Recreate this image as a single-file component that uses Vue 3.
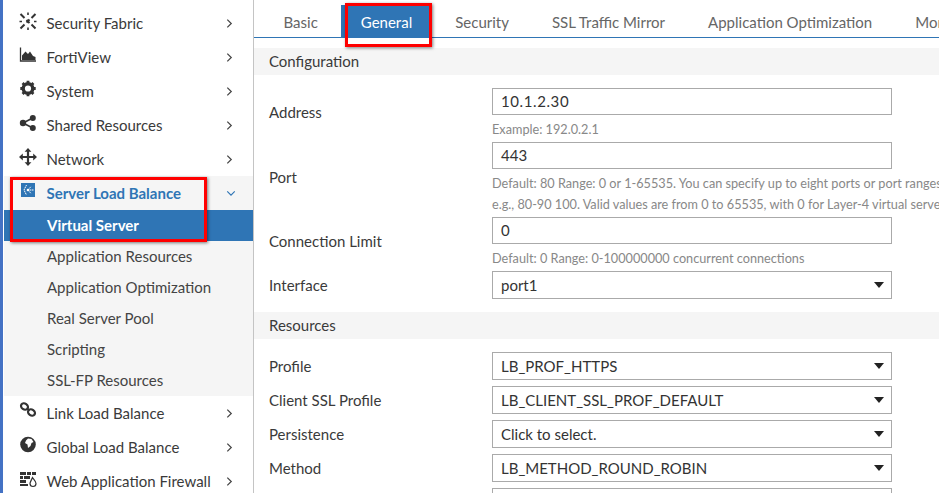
<script setup>
const topItems = [
  { name: 'Security Fabric', icon: 'fabric' },
  { name: 'FortiView', icon: 'view' },
  { name: 'System', icon: 'gear' },
  { name: 'Shared Resources', icon: 'share' },
  { name: 'Network', icon: 'move' }
]
const subItems = ['Application Resources', 'Application Optimization', 'Real Server Pool', 'Scripting', 'SSL-FP Resources']
const bottomItems = [
  { name: 'Link Load Balance', icon: 'link' },
  { name: 'Global Load Balance', icon: 'globe' },
  { name: 'Web Application Firewall', icon: 'wall' }
]
const tabs = ['Basic', 'General', 'Security', 'SSL Traffic Mirror', 'Application Optimization', 'Monitor']
const resources = [
  ['Profile', 'LB_PROF_HTTPS'],
  ['Client SSL Profile', 'LB_CLIENT_SSL_PROF_DEFAULT'],
  ['Persistence', 'Click to select.'],
  ['Method', 'LB_METHOD_ROUND_ROBIN'],
  ['', '']
]
</script>

<template>
  <div class="page">
    <aside class="sidebar">
      <div v-for="item in topItems" :key="item.name" class="nav-row">
        <svg class="nav-icon" viewBox="0 0 18 18">
          <g v-if="item.icon === 'fabric'" fill="none" stroke="#333" stroke-width="2">
            <path d="M1.500 2l4 4M12.500 12.500l4 4M16.500 2l-4 4M5.500 12.500l-4 4M7.500 8l3 3M10.500 7.500l-3 3" />
            <path d="M9 .5v2.500M.5 9.500h2.500M15 9.500h2.500M9 15.500V18" stroke-width="1.600" />
          </g>
          <g v-else-if="item.icon === 'view'">
            <path d="M1.500 1.500v13.500h15.500" fill="none" stroke="#333" stroke-width="1.300" />
            <path d="M3 14V9.500l3.500-4 2.500 2.500 2-2.500 3 4.500 2.500 1V14z" fill="#333" />
          </g>
          <g v-else-if="item.icon === 'gear'">
            <circle cx="9" cy="8.500" r="4.800" fill="none" stroke="#333" stroke-width="3.400" />
            <path d="M9 .8v3M9 13.200v3M1.300 8.500h3M13.700 8.500h3M3.600 3.100l2.100 2.100M12.300 11.800l2.100 2.100M14.400 3.100l-2.100 2.100M5.700 11.800l-2.100 2.100" stroke="#333" stroke-width="2.800" />
          </g>
          <g v-else-if="item.icon === 'share'" fill="#333">
            <circle cx="4" cy="9" r="3.200" />
            <circle cx="13.800" cy="4" r="3" />
            <circle cx="13.800" cy="14" r="3" />
            <path d="M4 9l9.800-5M4 9l9.800 5" stroke="#333" stroke-width="1.600" />
          </g>
          <g v-else fill="#333">
            <path d="M9 2v14M2 9h14" stroke="#333" stroke-width="2.200" />
            <path d="M9 0l3.400 3.800H5.600zM9 18l3.400-3.800H5.600zM0 9l3.800-3.400v6.800zM18 9l-3.800-3.400v6.800z" />
          </g>
        </svg>
        <span class="nav-label">{{ item.name }}</span>
        <svg class="chevron" viewBox="0 0 8 12"><path d="M1.500 1.500L6 6l-4.500 4.500" /></svg>
      </div>

      <div class="nav-group">
        <div class="nav-row open">
          <svg class="nav-icon" viewBox="0 0 18 18">
            <rect x="2" y="1" width="14" height="14" fill="#2f75b5" />
            <path d="M14.500 8H9M9 8l3-3.500M9 8l3 3.500M7.500 3L5 8l2.500 5" fill="none" stroke="#fff" stroke-width="1" stroke-dasharray="1.600 .6" />
            <circle cx="9" cy="8" r="1.300" fill="#fff" />
          </svg>
          <span class="nav-label strong">Server Load Balance</span>
          <svg class="chevron down" viewBox="0 0 12 8"><path d="M1.500 1.500L6 6l4.500-4.500" /></svg>
        </div>
        <div class="sub-row active">Virtual Server</div>
        <div v-for="sub in subItems" :key="sub" class="sub-row">{{ sub }}</div>
      </div>

      <div v-for="item in bottomItems" :key="item.name" class="nav-row">
        <svg class="nav-icon" viewBox="0 0 18 18">
          <g v-if="item.icon === 'link'" fill="none" stroke="#333" stroke-width="2.200">
            <ellipse cx="5.500" cy="4.500" rx="3.700" ry="3" transform="rotate(35 5.500 4.500)" />
            <ellipse cx="12.500" cy="10.500" rx="3.700" ry="3" transform="rotate(35 12.500 10.500)" />
            <path d="M8 6.500l2.500 2" />
          </g>
          <g v-else-if="item.icon === 'globe'">
            <circle cx="9" cy="8.500" r="7.800" fill="#333" />
            <path d="M9 2.500l3.500.5 2 3-2 1-1 3-2.500 2-.5-3.500L6 7l1-2.500z" fill="#fff" />
          </g>
          <g v-else fill="#333">
            <path d="M1 2h6v3H1zM8 2h4v3H8zM13 2h4v3h-4zM1 6h3v3H1zM5 6h6v3H5zM1 10h6v3H1zM1 14h8v2H1z" />
            <path d="M13.500 7.500c2 2.500 3.500 4 3.500 6a3 3 0 0 1-6 0c0-1.500 1.500-3.500 2.500-6z" fill="none" stroke="#333" stroke-width="1.200" />
          </g>
        </svg>
        <span class="nav-label">{{ item.name }}</span>
        <svg class="chevron" viewBox="0 0 8 12"><path d="M1.500 1.500L6 6l-4.500 4.500" /></svg>
      </div>
      <div class="callout callout-nav"></div>
    </aside>

    <main class="content">
      <nav class="tabs">
        <span v-for="tab in tabs" :key="tab" class="tab" :class="{ selected: tab === 'General' }">{{ tab }}</span>
      </nav>
      <div class="callout callout-tab"></div>

      <h2 class="section">Configuration</h2>
      <div class="form">
        <label class="field-label with-hint">Address</label>
        <div class="field">
          <div class="control addr">10.1.2.30</div>
          <p class="hint">Example: 192.0.2.1</p>
        </div>
        <label class="field-label with-hint">Port</label>
        <div class="field">
          <div class="control">443</div>
          <p class="hint">Default: 80 Range: 0 or 1-65535. You can specify up to eight ports or port ranges,</p>
          <p class="hint">e.g., 80-90 100. Valid values are from 0 to 65535, with 0 for Layer-4 virtual servers.</p>
        </div>
        <label class="field-label with-hint">Connection Limit</label>
        <div class="field">
          <div class="control">0</div>
          <p class="hint">Default: 0 Range: 0-100000000 concurrent connections</p>
        </div>
        <label class="field-label">Interface</label>
        <div class="field">
          <div class="control select"><span>port1</span><i class="caret"></i></div>
        </div>
      </div>

      <h2 class="section resources">Resources</h2>
      <div class="form select-form">
        <template v-for="row in resources" :key="row[0]">
          <label class="field-label">{{ row[0] }}</label>
          <div class="field">
            <div class="control select"><span>{{ row[1] }}</span><i v-if="row[1]" class="caret"></i></div>
          </div>
        </template>
      </div>
    </main>
  </div>
</template>

<style scoped>
.page {
  position: relative;
  display: flex;
  width: 939px;
  height: 493px;
  overflow: hidden;
  background: #fff;
  color: #333;
  font-family: Lato, "Liberation Sans", sans-serif;
  font-size: 15px;
}
.sidebar {
  position: relative;
  flex: 0 0 254px;
  box-sizing: border-box;
  padding: 6px 0 0 4px;
  border-right: 1px solid #c4c4c4;
  box-shadow: inset 3px 0 0 #4472c4;
}
.nav-row {
  display: flex;
  align-items: center;
  height: 34px;
}
.nav-icon {
  flex: none;
  width: 18px;
  height: 18px;
  margin: -4px 0 0 15px;
}
.nav-label {
  margin-left: 9.500px;
  white-space: nowrap;
  color: #3a3a3a;
}
.nav-label.strong {
  color: #2f75b5;
  font-weight: 700;
}
.chevron {
  flex: none;
  width: 7px;
  height: 11px;
  margin-left: auto;
  margin-right: 20px;
  fill: none;
  stroke: #444;
  stroke-width: 1.400;
}
.chevron.down {
  width: 10px;
  height: 7px;
  margin-right: 17px;
  stroke: #2f75b5;
}
.nav-group {
  background: #f5f5f5;
}
.sub-row {
  height: 31px;
  padding-left: 43px;
  line-height: 30px;
  color: #444;
  white-space: nowrap;
}
.sub-row.active {
  background: #2f75b5;
  color: #fff;
  font-weight: 700;
}
.callout {
  position: absolute;
  box-sizing: border-box;
  border: 3px solid #f00;
  box-shadow: 1px 1px 3px rgba(0, 0, 0, 0.5);
}
.callout-nav {
  left: 10px;
  top: 177px;
  width: 197px;
  height: 65px;
}
.callout-tab {
  left: 91px;
  top: 3px;
  width: 87px;
  height: 44px;
}
.content {
  position: relative;
  flex: 1;
  min-width: 0;
}
.tabs {
  display: flex;
  gap: 3px;
  box-sizing: border-box;
  height: 38px;
  padding: 5px 0 0 9.500px;
  border-bottom: 1px solid #2f75b5;
  white-space: nowrap;
}
.tab {
  flex: none;
  padding: 0 20px;
  line-height: 35px;
  color: #666;
}
.tab.selected {
  background: #2f75b5;
  color: #fff;
}
.section {
  margin: 10px 0 0;
  height: 27px;
  padding-left: 15px;
  background: #f5f5f5;
  font-size: 15px;
  font-weight: 400;
  line-height: 27px;
  color: #3a3a3a;
}
.section.resources {
  margin-top: 13px;
}
.form {
  display: grid;
  grid-template-columns: 238px 400px;
  padding: 13px 0 0 0;
}
.select-form {
  row-gap: 6px;
}
.field-label {
  align-self: center;
  padding-left: 15px;
  color: #3a3a3a;
}
.field-label.with-hint {
  padding-bottom: 6px;
}
.field {
  min-width: 0;
  white-space: nowrap;
}
.control {
  box-sizing: border-box;
  display: flex;
  align-items: center;
  width: 400px;
  height: 27px;
  padding: 0 7px 1px 8px;
  border: 1px solid #aaa;
  color: #333;
}
.control.addr {
  letter-spacing: 0.6px;
}
.control.select {
  justify-content: space-between;
  height: 28px;
  padding-bottom: 0;
}
.caret {
  width: 0;
  height: 0;
  border-left: 5px solid transparent;
  border-right: 5px solid transparent;
  border-top: 6px solid #222;
}
.hint {
  margin: 0;
  font-size: 12.700px;
  line-height: 21px;
  color: #888;
}
.control + .hint {
  padding-top: 4px;
}
.field:has(.hint) {
  padding-bottom: 2px;
}
</style>
